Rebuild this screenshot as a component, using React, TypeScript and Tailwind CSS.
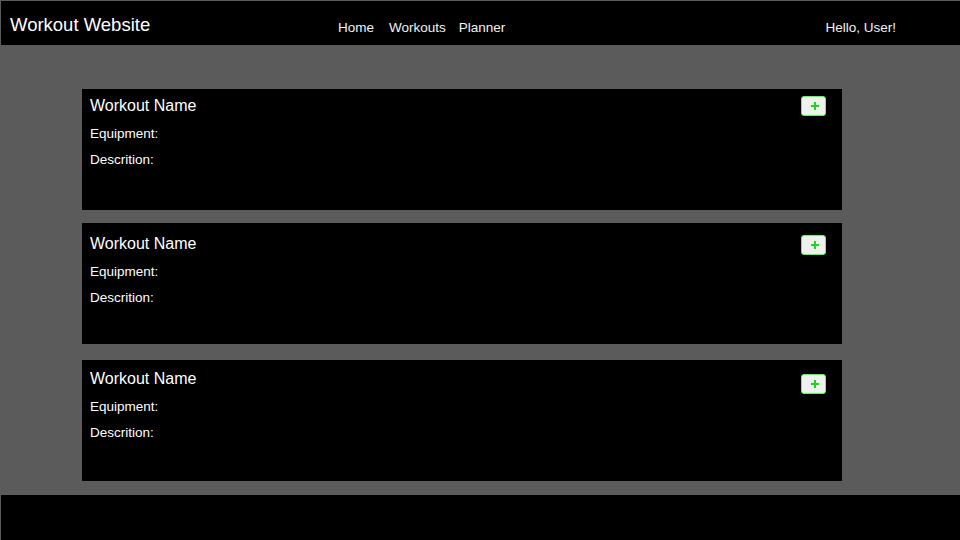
import React from 'react';

const font = { fontFamily: '"Liberation Sans", Arial, sans-serif' };

const WorkoutCard: React.FC<{ padTop: string; btnTop: string; spacing: string }> = ({ padTop, btnTop, spacing }) => (
  <div className={`bg-black h-[121px] w-[760px] pl-[8px] pr-[16px] text-white flex justify-between items-start ${spacing}`}>
    <div className={padTop}>
      <div className="text-[16px] leading-[18px]">Workout Name</div>
      <div className="mt-[11px] text-[13.5px] leading-[15px]">Equipment:</div>
      <div className="mt-[11px] text-[13.5px] leading-[15px]">Descrition:</div>
    </div>
    <button
      type="button"
      className={`h-[20px] w-[25px] rounded-[3px] border border-[#55ff55] bg-[#eef2ee] flex items-center justify-end pr-[5px] ${btnTop}`}
      aria-label="Add workout"
    >
      <svg width="10" height="10" viewBox="0 0 10 10">
        <path d="M5 1v8M1 5h8" stroke="#22d322" strokeWidth="2" />
      </svg>
    </button>
  </div>
);

const App: React.FC = () => (
  <div className="h-screen w-full bg-[#5b5b5b] pl-px pt-px flex flex-col overflow-hidden" style={font}>
    <header className="h-[44px] shrink-0 bg-black text-white flex items-start">
      <div className="w-[337px] pl-[9px] pt-[13px] text-[18.5px] leading-[22px]">Workout Website</div>
      <nav className="flex pt-[19px] text-[13.5px] leading-[15px] text-[#f2f2f2]">
        <span>Home</span>
        <span className="ml-[15px]">Workouts</span>
        <span className="ml-[13px]">Planner</span>
      </nav>
      <div className="ml-auto mr-[64px] pt-[19px] text-[13.5px] leading-[15px] text-[#f2f2f2]">Hello, User!</div>
    </header>

    <main className="flex-1 min-h-0 pt-[44px] pl-[81px]">
      <WorkoutCard padTop="pt-[8px]" btnTop="mt-[7px]" spacing="mb-[13px]" />
      <WorkoutCard padTop="pt-[12px]" btnTop="mt-[12px]" spacing="mb-[16px]" />
      <WorkoutCard padTop="pt-[10px]" btnTop="mt-[14px]" spacing="" />
    </main>

    <footer className="h-[45px] shrink-0 bg-black" />
  </div>
);

export default App;
